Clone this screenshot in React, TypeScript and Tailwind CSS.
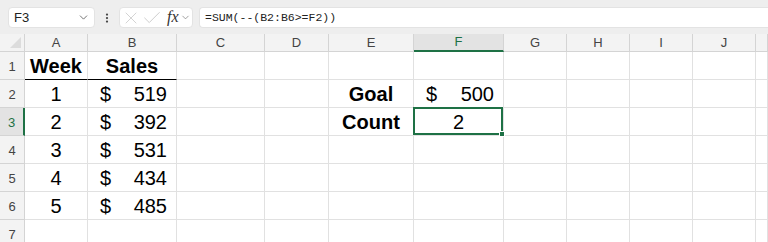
import { ChevronDown, EllipsisVertical, X, Check } from 'lucide-react';

type Cell = {
  text?: string;
  bold?: boolean;
  money?: string;
  underline?: boolean;
};

const columns = ['A', 'B', 'C', 'D', 'E', 'F', 'G', 'H', 'I', 'J', 'K'];
const rows = [1, 2, 3, 4, 5, 6, 7];

const sales = [519, 392, 531, 434, 485];

const cells: Record<string, Cell> = {
  A1: { text: 'Week', bold: true, underline: true },
  B1: { text: 'Sales', bold: true, underline: true },
  E2: { text: 'Goal', bold: true },
  F2: { money: '500' },
  E3: { text: 'Count', bold: true },
  F3: { text: '2' },
};
sales.forEach((s, i) => {
  cells[`A${i + 2}`] = { text: String(i + 1) };
  cells[`B${i + 2}`] = { money: String(s) };
});

const ActiveCol = 'F';
const ActiveRow = 3;

function NameBox() {
  return (
    <div className="w-[87px] h-[21px] bg-white rounded-[4px] border border-[#e3e3e3] flex items-center justify-between pl-[5px] pr-[4px]">
      <span className="text-[13px] text-[#222]">F3</span>
      <ChevronDown size={13} strokeWidth={1.5} className="text-[#555]" />
    </div>
  );
}

function FormulaButtons() {
  return (
    <div className="w-[74px] h-[21px] bg-white rounded-[4px] border border-[#e3e3e3] flex items-center pl-[1px] gap-0">
      <X size={20} strokeWidth={0.9} className="text-[#c4c4c4] shrink-0" />
      <Check size={22} strokeWidth={0.9} className="text-[#c4c4c4] shrink-0" />
      <span className="text-[16px] italic text-[#333] font-['Liberation_Serif',serif] leading-none -mt-[2px] ml-[4px]">fx</span>
      <ChevronDown size={11} strokeWidth={1.5} className="text-[#777] ml-[1px]" />
    </div>
  );
}

function Toolbar() {
  return (
    <div className="h-[34px] bg-[#eeeeee] flex items-center pl-[8px] pt-[1px] gap-[4px]">
      <NameBox />
      <div className="w-[16px] flex justify-center">
        <EllipsisVertical size={12} strokeWidth={2.5} className="text-[#444]" />
      </div>
      <FormulaButtons />
      <div className="flex-1 h-[21px] bg-white rounded-l-[4px] border border-r-0 border-[#e3e3e3] ml-[2px] flex items-center pl-[5px]">
        <span className="text-[11.5px] text-[#222] font-['Liberation_Mono',monospace]">=SUM(--(B2:B6&gt;=F2))</span>
      </div>
    </div>
  );
}

function DataCell({ col, row }: { col: string; row: number }) {
  const id = `${col}${row}`;
  const c = cells[id];
  const active = col === ActiveCol && row === ActiveRow;
  return (
    <div
      className={`relative h-[28px] border-r border-b border-[#e1e1e1] text-[20px] text-black font-['Liberation_Sans',Arial,sans-serif] ${
        c?.underline ? 'border-b-black' : ''
      }`}
    >
      {c?.money ? (
        <div className="h-full flex items-center justify-between pl-[12px] pr-[9px]">
          <span>$</span>
          <span>{c.money}</span>
        </div>
      ) : c?.text ? (
        <div className={`h-full flex items-center justify-center ${c.bold ? 'font-bold' : ''}`}>{c.text}</div>
      ) : null}
      {active && (
        <div className="absolute -left-px -top-px -right-0 -bottom-0 border-2 border-[#1e7145] z-10">
          <div className="absolute -right-[4px] -bottom-[4px] w-[6px] h-[6px] bg-[#1e7145] border border-white" />
        </div>
      )}
    </div>
  );
}

export default function App() {
  return (
    <div className="w-[768px] h-[242px] overflow-hidden bg-white font-['Liberation_Sans',Arial,sans-serif]">
      <Toolbar />
      <div className="grid grid-cols-[25px_63px_89px_88px_64px_85px_90px_63px_63px_63px_63px_1fr] grid-rows-[18px_repeat(7,28px)]">
        {/* corner */}
        <div className="bg-[#f3f3f3] border-r border-b border-[#d4d4d4] flex items-end justify-end pr-[3px] pb-[3px]">
          <svg width="11" height="11" viewBox="0 0 11 11">
            <polygon points="11,0 11,11 0,11" fill="#dcdcdc" />
          </svg>
        </div>
        {columns.map((col) => (
          <div
            key={col}
            className={`flex items-center justify-center text-[13px] border-r border-b ${
              col === ActiveCol
                ? 'bg-[#e3e3e3] text-[#1e7145] border-b-2 border-b-[#1e7145] border-r-[#d4d4d4]'
                : 'bg-[#f3f3f3] text-[#444] border-[#d4d4d4]'
            }`}
          >
            {col === 'K' ? '' : col}
          </div>
        ))}
        {rows.map((row) => (
          <div key={row} className="contents">
            <div
              className={`flex items-center justify-center pt-[2px] text-[13px] border-b ${
                row === ActiveRow
                  ? 'bg-[#e3e3e3] text-[#1e7145] border-r-2 border-r-[#1e7145] border-b-[#d4d4d4]'
                  : 'bg-[#f3f3f3] text-[#444] border-r border-[#d4d4d4]'
              }`}
            >
              {row}
            </div>
            {columns.map((col) => (
              <DataCell key={col} col={col} row={row} />
            ))}
          </div>
        ))}
      </div>
    </div>
  );
}
